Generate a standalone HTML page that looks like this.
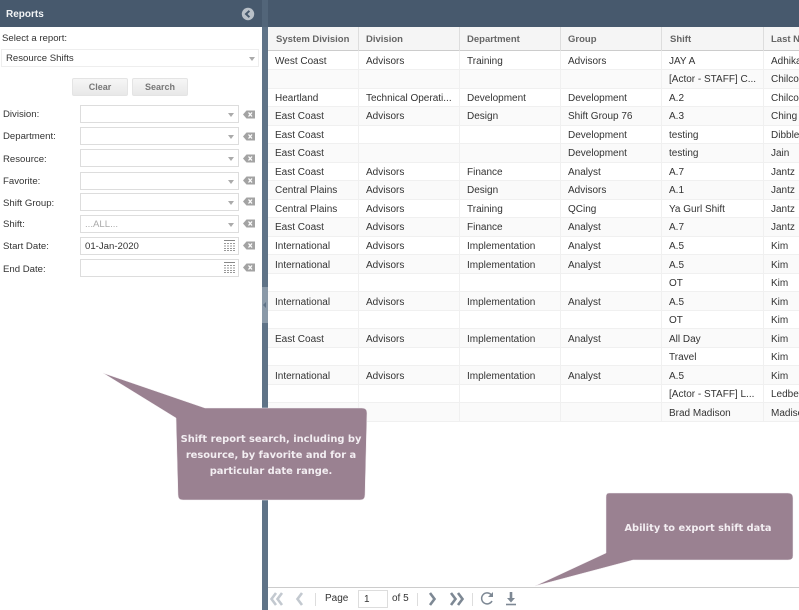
<!DOCTYPE html>
<html><head><meta charset="utf-8"><style>
html,body{margin:0;padding:0;background:#fff}
#p{position:relative;width:799px;height:610px;overflow:hidden;font-family:"Liberation Sans",sans-serif;font-size:10px;color:#333;background:#fff}
.a{position:absolute}
.t{position:absolute;white-space:nowrap;line-height:12px;margin-top:1px}
.h{position:absolute;top:28px;height:23px;line-height:23px;font-weight:bold;color:#666;font-size:9.5px;white-space:nowrap}
.v{position:absolute;top:27px;width:1px;background:#ddd;height:24px}
.vl{position:absolute;top:51px;width:1px;background:#f0f0f0;height:371px}
.r{position:absolute;left:268px;width:531px;height:18px;border-bottom:1px solid #f0f0f0;box-sizing:content-box}
.f{position:absolute;left:80px;width:159px;height:18px;border:1px solid #ddd;box-sizing:border-box;background:#fff}
.l{position:absolute;left:3px;white-space:nowrap;line-height:12px;color:#333;font-size:9.6px}
.btn{position:absolute;top:78px;height:18px;border:1px solid #e4e4e4;border-radius:2px;background:linear-gradient(#f6f6f6,#e8e8e8);box-sizing:border-box;text-align:center;line-height:16px;font-weight:bold;color:#777;font-size:9px}
.ca{position:absolute;left:147px;top:7px;width:0;height:0;border-left:3.5px solid transparent;border-right:3.5px solid transparent;border-top:4px solid #aaa}
.c{position:absolute;white-space:nowrap;font-family:"DejaVu Sans",sans-serif;font-weight:bold;color:#f3eef2;font-size:9.9px;text-align:center;line-height:16px}
.s{font-size:9.6px}
</style></head><body><div id="p">
<div class="a" style="left:0;top:0;width:799px;height:27px;background:#47596d"></div>
<div class="a" style="left:262px;top:0;width:6px;height:27px;background:#526579"></div>
<div class="a" style="left:262px;top:27px;width:6px;height:583px;background:#5f7387"></div>
<div class="a" style="left:262px;top:287px;width:6px;height:36px;background:#8a99a8"></div>
<div class="a" style="left:263px;top:302px;width:0;height:0;border-top:3px solid transparent;border-bottom:3px solid transparent;border-right:3px solid #5f7387"></div>
<div class="t" style="left:6px;top:8px;color:#f2f4f6;font-weight:bold;font-size:10px">Reports</div>
<svg class="a" style="left:241px;top:7px" width="14" height="14"><circle cx="7" cy="7" r="6.2" fill="#b9c0c8"/><path d="M8.4 3.8L5 7l3.4 3.2" fill="none" stroke="#47596d" stroke-width="2"/></svg>

<div class="t s" style="left:2px;top:32px">Select a report:</div>
<div class="a" style="left:1px;top:49px;width:258px;height:18px;border:1px solid #eee;box-sizing:border-box"><div class="t s" style="left:4px;top:2px">Resource Shifts</div><div class="ca" style="left:247px"></div></div>
<div class="btn" style="left:72px;width:56px">Clear</div>
<div class="btn" style="left:132px;width:56px">Search</div>

<div class="l" style="top:109px">Division:</div>
<div class="l" style="top:131px">Department:</div>
<div class="l" style="top:154px">Resource:</div>
<div class="l" style="top:176px">Favorite:</div>
<div class="l" style="top:198px">Shift Group:</div>
<div class="l" style="top:219px">Shift:</div>
<div class="l" style="top:241px">Start Date:</div>
<div class="l" style="top:264px">End Date:</div>

<div class="f" style="top:105px"><div class="ca"></div></div>
<div class="f" style="top:127px"><div class="ca"></div></div>
<div class="f" style="top:149px"><div class="ca"></div></div>
<div class="f" style="top:172px"><div class="ca"></div></div>
<div class="f" style="top:193px"><div class="ca"></div></div>
<div class="f" style="top:215px"><div class="t s" style="left:4px;top:2px;color:#aaa">...ALL...</div><div class="ca"></div></div>
<div class="f" style="top:237px"><div class="t s" style="left:4px;top:2px">01-Jan-2020</div>
<svg class="a" style="left:143px;top:2px" width="12" height="12"><path d="M0 .5h11" stroke="#888"/><path d="M0 3.5h11M0 6h11M0 8.5h11M0 10.500h11" stroke="#999" stroke-dasharray="2 1"/></svg></div>
<div class="f" style="top:259px">
<svg class="a" style="left:143px;top:2px" width="12" height="12"><path d="M0 .5h11" stroke="#888"/><path d="M0 3.5h11M0 6h11M0 8.5h11M0 10.500h11" stroke="#999" stroke-dasharray="2 1"/></svg></div>

<svg class="a" style="left:243px;top:0" width="13" height="280" fill="#a3a3a3">
<g><path d="M0 114.500L3.500 110.500H12V118.500H3.500Z"/><path d="M5.500 112.500l3.500 4M9 112.500l-3.500 4" stroke="#fff" stroke-width="1.300"/></g>
<g transform="translate(0,22)"><path d="M0 114.500L3.500 110.500H12V118.500H3.500Z"/><path d="M5.500 112.500l3.500 4M9 112.500l-3.500 4" stroke="#fff" stroke-width="1.300"/></g>
<g transform="translate(0,44)"><path d="M0 114.500L3.500 110.500H12V118.500H3.500Z"/><path d="M5.500 112.500l3.500 4M9 112.500l-3.500 4" stroke="#fff" stroke-width="1.300"/></g>
<g transform="translate(0,66)"><path d="M0 114.500L3.500 110.500H12V118.500H3.500Z"/><path d="M5.500 112.500l3.500 4M9 112.500l-3.500 4" stroke="#fff" stroke-width="1.300"/></g>
<g transform="translate(0,87)"><path d="M0 114.500L3.500 110.500H12V118.500H3.500Z"/><path d="M5.500 112.500l3.500 4M9 112.500l-3.500 4" stroke="#fff" stroke-width="1.300"/></g>
<g transform="translate(0,109)"><path d="M0 114.500L3.500 110.500H12V118.500H3.500Z"/><path d="M5.500 112.500l3.500 4M9 112.500l-3.500 4" stroke="#fff" stroke-width="1.300"/></g>
<g transform="translate(0,131)"><path d="M0 114.500L3.500 110.500H12V118.500H3.500Z"/><path d="M5.500 112.500l3.500 4M9 112.500l-3.500 4" stroke="#fff" stroke-width="1.300"/></g>
<g transform="translate(0,153)"><path d="M0 114.500L3.500 110.500H12V118.500H3.500Z"/><path d="M5.500 112.500l3.500 4M9 112.500l-3.500 4" stroke="#fff" stroke-width="1.300"/></g>
</svg>

<!-- grid header -->
<div class="a" style="left:268px;top:27px;width:531px;height:23px;background:#f5f5f5;border-bottom:1px solid #ccc"></div>
<div class="h" style="left:276px">System Division</div>
<div class="h" style="left:366px">Division</div>
<div class="h" style="left:467px">Department</div>
<div class="h" style="left:568px">Group</div>
<div class="h" style="left:670px">Shift</div>
<div class="h" style="left:771px">Last N</div>
<div class="v" style="left:358px"></div><div class="v" style="left:459px"></div><div class="v" style="left:560px"></div><div class="v" style="left:661px"></div><div class="v" style="left:763px"></div>

<!-- rows -->
<div class="r" style="top:51px;height:18px"></div>
<div class="r" style="top:70px;height:18px;background:#fafafa"></div>
<div class="r" style="top:88px;height:18px"></div>
<div class="r" style="top:107px;height:18px;background:#fafafa"></div>
<div class="r" style="top:125px;height:18px"></div>
<div class="r" style="top:144px;height:18px;background:#fafafa"></div>
<div class="r" style="top:162px;height:18px"></div>
<div class="r" style="top:181px;height:18px;background:#fafafa"></div>
<div class="r" style="top:199px;height:18px"></div>
<div class="r" style="top:218px;height:18px;background:#fafafa"></div>
<div class="r" style="top:236px;height:18px"></div>
<div class="r" style="top:255px;height:18px;background:#fafafa"></div>
<div class="r" style="top:273px;height:18px"></div>
<div class="r" style="top:292px;height:18px;background:#fafafa"></div>
<div class="r" style="top:310px;height:18px"></div>
<div class="r" style="top:329px;height:18px;background:#fafafa"></div>
<div class="r" style="top:347px;height:18px"></div>
<div class="r" style="top:366px;height:18px;background:#fafafa"></div>
<div class="r" style="top:384px;height:18px"></div>
<div class="r" style="top:403px;height:18px;background:#fafafa"></div>
<div class="vl" style="left:358px"></div><div class="vl" style="left:459px"></div><div class="vl" style="left:560px"></div><div class="vl" style="left:661px"></div><div class="vl" style="left:763px"></div>

<div class="t" style="left:275px;top:55px">West Coast</div><div class="t" style="left:366px;top:55px">Advisors</div><div class="t" style="left:467px;top:55px">Training</div><div class="t" style="left:568px;top:55px">Advisors</div><div class="t" style="left:669px;top:55px">JAY A</div><div class="t" style="left:771px;top:55px">Adhikari</div>
<div class="t" style="left:669px;top:73px">[Actor - STAFF] C...</div><div class="t" style="left:771px;top:73px">Chilcoat</div>
<div class="t" style="left:275px;top:92px">Heartland</div><div class="t" style="left:366px;top:92px">Technical Operati...</div><div class="t" style="left:467px;top:92px">Development</div><div class="t" style="left:568px;top:92px">Development</div><div class="t" style="left:669px;top:92px">A.2</div><div class="t" style="left:771px;top:92px">Chilcoat</div>
<div class="t" style="left:275px;top:110px">East Coast</div><div class="t" style="left:366px;top:110px">Advisors</div><div class="t" style="left:467px;top:110px">Design</div><div class="t" style="left:568px;top:110px">Shift Group 76</div><div class="t" style="left:669px;top:110px">A.3</div><div class="t" style="left:771px;top:110px">Ching</div>
<div class="t" style="left:275px;top:129px">East Coast</div><div class="t" style="left:568px;top:129px">Development</div><div class="t" style="left:669px;top:129px">testing</div><div class="t" style="left:771px;top:129px">Dibble</div>
<div class="t" style="left:275px;top:147px">East Coast</div><div class="t" style="left:568px;top:147px">Development</div><div class="t" style="left:669px;top:147px">testing</div><div class="t" style="left:771px;top:147px">Jain</div>
<div class="t" style="left:275px;top:166px">East Coast</div><div class="t" style="left:366px;top:166px">Advisors</div><div class="t" style="left:467px;top:166px">Finance</div><div class="t" style="left:568px;top:166px">Analyst</div><div class="t" style="left:669px;top:166px">A.7</div><div class="t" style="left:771px;top:166px">Jantz</div>
<div class="t" style="left:275px;top:184px">Central Plains</div><div class="t" style="left:366px;top:184px">Advisors</div><div class="t" style="left:467px;top:184px">Design</div><div class="t" style="left:568px;top:184px">Advisors</div><div class="t" style="left:669px;top:184px">A.1</div><div class="t" style="left:771px;top:184px">Jantz</div>
<div class="t" style="left:275px;top:203px">Central Plains</div><div class="t" style="left:366px;top:203px">Advisors</div><div class="t" style="left:467px;top:203px">Training</div><div class="t" style="left:568px;top:203px">QCing</div><div class="t" style="left:669px;top:203px">Ya Gurl Shift</div><div class="t" style="left:771px;top:203px">Jantz</div>
<div class="t" style="left:275px;top:221px">East Coast</div><div class="t" style="left:366px;top:221px">Advisors</div><div class="t" style="left:467px;top:221px">Finance</div><div class="t" style="left:568px;top:221px">Analyst</div><div class="t" style="left:669px;top:221px">A.7</div><div class="t" style="left:771px;top:221px">Jantz</div>
<div class="t" style="left:275px;top:240px">International</div><div class="t" style="left:366px;top:240px">Advisors</div><div class="t" style="left:467px;top:240px">Implementation</div><div class="t" style="left:568px;top:240px">Analyst</div><div class="t" style="left:669px;top:240px">A.5</div><div class="t" style="left:771px;top:240px">Kim</div>
<div class="t" style="left:275px;top:259px">International</div><div class="t" style="left:366px;top:259px">Advisors</div><div class="t" style="left:467px;top:259px">Implementation</div><div class="t" style="left:568px;top:259px">Analyst</div><div class="t" style="left:669px;top:259px">A.5</div><div class="t" style="left:771px;top:259px">Kim</div>
<div class="t" style="left:669px;top:277px">OT</div><div class="t" style="left:771px;top:277px">Kim</div>
<div class="t" style="left:275px;top:296px">International</div><div class="t" style="left:366px;top:296px">Advisors</div><div class="t" style="left:467px;top:296px">Implementation</div><div class="t" style="left:568px;top:296px">Analyst</div><div class="t" style="left:669px;top:296px">A.5</div><div class="t" style="left:771px;top:296px">Kim</div>
<div class="t" style="left:669px;top:314px">OT</div><div class="t" style="left:771px;top:314px">Kim</div>
<div class="t" style="left:275px;top:333px">East Coast</div><div class="t" style="left:366px;top:333px">Advisors</div><div class="t" style="left:467px;top:333px">Implementation</div><div class="t" style="left:568px;top:333px">Analyst</div><div class="t" style="left:669px;top:333px">All Day</div><div class="t" style="left:771px;top:333px">Kim</div>
<div class="t" style="left:669px;top:351px">Travel</div><div class="t" style="left:771px;top:351px">Kim</div>
<div class="t" style="left:275px;top:370px">International</div><div class="t" style="left:366px;top:370px">Advisors</div><div class="t" style="left:467px;top:370px">Implementation</div><div class="t" style="left:568px;top:370px">Analyst</div><div class="t" style="left:669px;top:370px">A.5</div><div class="t" style="left:771px;top:370px">Kim</div>
<div class="t" style="left:669px;top:388px">[Actor - STAFF] L...</div><div class="t" style="left:771px;top:388px">Ledbetter</div>
<div class="t" style="left:669px;top:407px">Brad Madison</div><div class="t" style="left:771px;top:407px">Madison</div>

<!-- toolbar -->
<div class="a" style="left:268px;top:587px;width:531px;height:1px;background:#ccc"></div>
<svg class="a" style="left:268px;top:588px" width="260" height="22" fill="none">
<path d="M8 5L3.500 11 8 17M14 5L9.500 11 14 17" stroke="#c3c9d0" stroke-width="2.600"/>
<path d="M34 5L29.500 11 34 17" stroke="#c3c9d0" stroke-width="2.600"/>
<path d="M47.500 5v13M149.500 5v13M204.500 5v13" stroke="#ddd"/>
<path d="M162 5L166.500 11 162 17" stroke="#7d8894" stroke-width="2.600"/>
<path d="M183 5L187.500 11 183 17M190 5L194.500 11 190 17" stroke="#7d8894" stroke-width="2.600"/>
<path d="M223 6.500A5.500 5.500 0 1 0 224 13" stroke="#7d8894" stroke-width="1.500"/><path d="M225 4v5h-5z" fill="#7d8894"/>
<path d="M243 4v7" stroke="#7d8894" stroke-width="2.600"/><path d="M239 10h8l-4 4.500z" fill="#7d8894"/><path d="M238 16.500h10" stroke="#7d8894" stroke-width="1.600"/>
</svg>
<div class="t" style="left:325px;top:592px">Page</div>
<div class="a" style="left:358px;top:590px;width:30px;height:18px;border:1px solid #ddd;box-sizing:border-box"><div class="t" style="left:5px;top:2px">1</div></div>
<div class="t" style="left:392px;top:592px">of 5</div>

<!-- callouts -->
<svg class="a" style="left:0;top:0" width="799" height="610">
<path d="M103 373L205 408H362Q367 408 367 413L365 495Q365 500 360 500H183Q178 500 178 495L176 418Z" fill="#9a8191" stroke="#f4f0f3" stroke-width=".5"/>
<path d="M609 493H788Q793 493 793 498V556Q793 560 788 560H633L535 586L606 553V497Q606 493 609 493Z" fill="#9a8191" stroke="#f4f0f3" stroke-width=".5"/>
</svg>
<div class="c" style="left:178px;top:431px;width:186px;margin-top:1px">Shift report search, including by<br>resource, by favorite and for a<br>particular date range.</div>
<div class="c" style="left:606px;top:521px;width:184px;font-size:9.8px">Ability to export shift data</div>
</div></body></html>
